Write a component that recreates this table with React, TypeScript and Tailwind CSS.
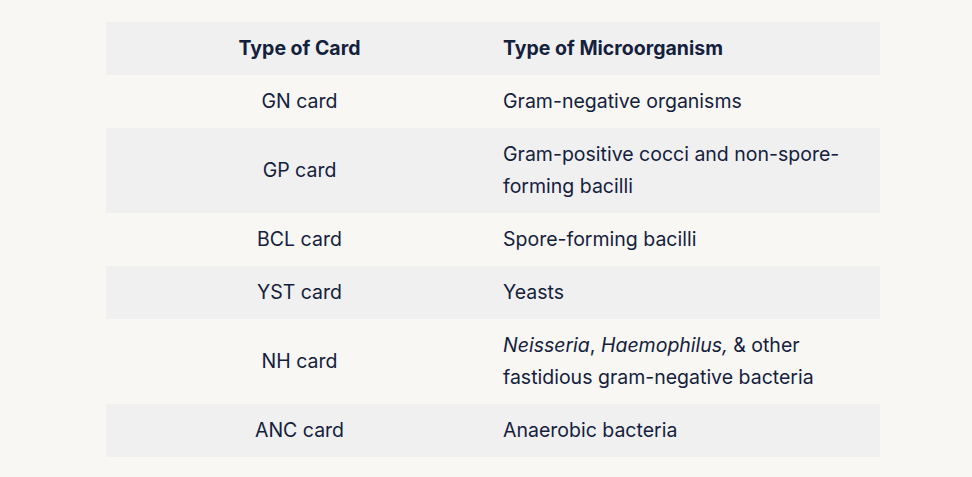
const rows: { card: string; org: React.ReactNode }[] = [
  { card: 'GN card', org: 'Gram-negative organisms' },
  { card: 'GP card', org: 'Gram-positive cocci and non-spore-forming bacilli' },
  { card: 'BCL card', org: 'Spore-forming bacilli' },
  { card: 'YST card', org: 'Yeasts' },
  {
    card: 'NH card',
    org: (
      <>
        <em>Neisseria</em>, <em>Haemophilus,</em> &amp; other fastidious gram-negative bacteria
      </>
    ),
  },
  { card: 'ANC card', org: 'Anaerobic bacteria' },
];

export default function App() {
  return (
    <div className="min-h-screen bg-[#f8f7f4] pt-[22px] font-['Inter',sans-serif] text-[19.5px] leading-[32px] text-[#14213d]">
      <table className="ml-[106px] w-[774px] table-fixed border-collapse">
        <thead>
          <tr className="bg-[#f0f0f1]">
            <th className="w-1/2 px-[10px] pt-[10px] pb-[11px] text-center font-bold">Type of Card</th>
            <th className="w-1/2 px-[10px] pt-[10px] pb-[11px] text-left font-bold">Type of Microorganism</th>
          </tr>
        </thead>
        <tbody>
          {rows.map((r, i) => (
            <tr key={r.card} className={i % 2 === 1 ? 'bg-[#f0f0f1]' : ''}>
              <td className="px-[10px] pt-[10px] pb-[11px] text-center">{r.card}</td>
              <td className="px-[10px] pt-[10px] pb-[11px] text-left">{r.org}</td>
            </tr>
          ))}
        </tbody>
      </table>
    </div>
  );
}
